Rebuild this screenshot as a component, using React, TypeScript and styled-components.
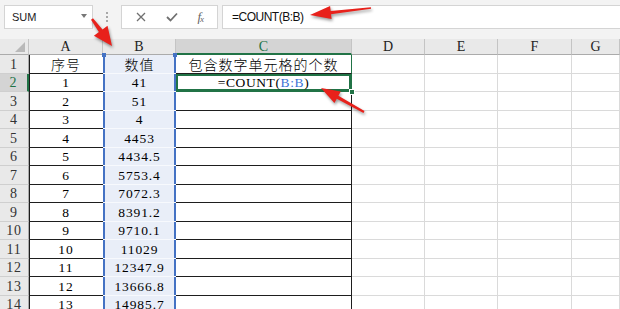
import React from 'react';
import styled, { createGlobalStyle } from 'styled-components';

const GlobalStyle = createGlobalStyle`
  html, body {
    margin: 0;
    padding: 0;
    background: #ffffff;
  }
  * {
    box-sizing: border-box;
  }
`;

const Page = styled.div`
  position: relative;
  width: 620px;
  height: 309px;
  overflow: hidden;
  background: #ffffff;
`;

const Toolbar = styled.div`
  height: 39px;
  background: #f3f3f3;
  display: flex;
  align-items: flex-start;
  padding: 5px 0 0 4px;
`;

const NameBox = styled.div`
  width: 89px;
  height: 24px;
  background: #ffffff;
  border: 1px solid #d4d4d4;
  display: flex;
  align-items: center;
  justify-content: space-between;
  padding: 0 5px 0 7px;
  font-family: 'Liberation Sans', Arial, sans-serif;
  font-size: 11px;
  color: #222;
`;

const DropArrow = styled.span`
  width: 0;
  height: 0;
  border-left: 3.5px solid transparent;
  border-right: 3.5px solid transparent;
  border-top: 4px solid #777;
  margin-bottom: 3px;
`;

const Grip = styled.div`
  width: 28px;
  height: 24px;
  display: flex;
  flex-direction: column;
  align-items: center;
  justify-content: center;
  gap: 2px;
`;

const GripDot = styled.span`
  width: 2px;
  height: 2px;
  background: #a8a8a8;
`;

const FxBox = styled.div`
  width: 97px;
  height: 24px;
  background: #ffffff;
  border: 1px solid #d4d4d4;
  display: flex;
  align-items: center;
  justify-content: space-around;
  padding: 0 4px;
`;

const FxText = styled.span`
  font-family: 'Liberation Serif', serif;
  font-style: italic;
  font-size: 13px;
  color: #666;
  letter-spacing: -1px;

  sub {
    font-size: 9px;
    vertical-align: -1px;
  }
`;

const FormulaInput = styled.div`
  flex: 1;
  height: 24px;
  margin-left: 4px;
  background: #ffffff;
  border: 1px solid #d4d4d4;
  border-right: none;
  display: flex;
  align-items: center;
  padding-left: 9px;
  font-family: 'Liberation Sans', Arial, sans-serif;
  font-size: 12px;
  letter-spacing: -0.5px;
  color: #111;
`;

const Sheet = styled.div`
  display: grid;
  grid-template-columns: 29px 74px 73px 176px 73px 73px 74px 1fr;
  grid-template-rows: 16px;
  grid-auto-rows: 18.5px;
`;

const Corner = styled.div`
  background: #e9e9e9;
  border-right: 1px solid #c4c4c4;
  border-bottom: 1px solid #ababab;
  display: flex;
  align-items: flex-end;
  justify-content: flex-end;
  padding: 0 3px 2px 0;
`;

const ColHeader = styled.div<{ $selected?: boolean }>`
  background: ${(p) => (p.$selected ? '#d4d4d4' : '#e9e9e9')};
  border-right: 1px solid #c4c4c4;
  border-bottom: ${(p) => (p.$selected ? '2px solid #217346' : '1px solid #ababab')};
  display: flex;
  align-items: center;
  justify-content: center;
  font-family: 'Liberation Serif', serif;
  font-size: 14px;
  color: ${(p) => (p.$selected ? '#217346' : '#222')};
  padding-top: 1px;
`;

const RowHeader = styled.div<{ $selected?: boolean }>`
  background: ${(p) => (p.$selected ? '#d4d4d4' : '#e9e9e9')};
  border-bottom: 1px solid #cfcfcf;
  border-right: ${(p) => (p.$selected ? '2px solid #217346' : '1px solid #ababab')};
  display: flex;
  align-items: center;
  justify-content: center;
  font-family: 'Liberation Serif', serif;
  font-size: 14px;
  letter-spacing: 0.8px;
  color: ${(p) => (p.$selected ? '#217346' : '#333')};
  padding-top: 2px;
`;

type Kind = 'a' | 'b' | 'c' | 'grid';

const kindStyles: Record<Kind, string> = {
  a: `
    border-bottom: 1px solid #1e1e1e;
    box-shadow: inset 1px 0 #1e1e1e;
  `,
  b: `
    background: #e9eef8;
    border-bottom: 1px solid #f7f9fd;
    box-shadow: inset 2px 0 #4472c4, inset -2px 0 #4472c4;
  `,
  c: `
    border-right: 1px solid #1e1e1e;
    border-bottom: 1px solid #1e1e1e;
  `,
  grid: `
    border-right: 1px solid #dadada;
    border-bottom: 1px solid #dadada;
  `,
};

const Cell = styled.div<{ $kind: Kind; $active?: boolean; $greenRight?: boolean }>`
  position: relative;
  display: flex;
  align-items: center;
  justify-content: center;
  padding-top: 2px;
  font-family: 'Liberation Serif', serif;
  font-size: 13.5px;
  letter-spacing: 0.9px;
  color: #000;
  white-space: nowrap;
  ${(p) => kindStyles[p.$kind]}
  ${(p) => (p.$greenRight ? 'border-right-color: #217346;' : '')}
  ${(p) =>
    p.$active
      ? `
    border-right-color: #217346;
    border-bottom-color: #217346;
    box-shadow: inset 0 0 0 2px #217346;
  `
      : ''}
`;

const CjkText = styled.span`
  font-family: 'Noto Sans CJK SC', sans-serif;
  font-size: 14px;
  font-weight: 300;
  letter-spacing: 1px;
  line-height: 1;
  margin-top: -2px;
`;

const FormulaText = styled.span`
  letter-spacing: 0.6px;
`;

const RefText = styled.span`
  color: #3d74d6;
`;

const FillHandle = styled.span`
  position: absolute;
  right: -4px;
  bottom: -4px;
  width: 6px;
  height: 6px;
  background: #217346;
  border: 1px solid #ffffff;
  z-index: 2;
`;

const RefHandle = styled.span<{ $side: 'left' | 'right' }>`
  position: absolute;
  top: -2px;
  ${(p) => (p.$side === 'left' ? 'left: -1px;' : 'right: -1px;')}
  width: 4px;
  height: 4px;
  background: #4472c4;
  z-index: 2;
`;

const Annotations = styled.svg`
  position: absolute;
  left: 0;
  top: 0;
  width: 620px;
  height: 309px;
  pointer-events: none;
  filter: drop-shadow(1px 2px 1.5px rgba(0, 0, 0, 0.4));
`;

const values: [string, string][] = [
  ['1', '41'],
  ['2', '51'],
  ['3', '4'],
  ['4', '4453'],
  ['5', '4434.5'],
  ['6', '5753.4'],
  ['7', '7072.3'],
  ['8', '8391.2'],
  ['9', '9710.1'],
  ['10', '11029'],
  ['11', '12347.9'],
  ['12', '13666.8'],
  ['13', '14985.7'],
];

const columns = ['A', 'B', 'C', 'D', 'E', 'F', 'G'];

// tail -> tip, returns polygon points for a tapered arrow
function arrow(tx: number, ty: number, hx: number, hy: number, headLen: number, headHalf: number, neck: number, tail: number) {
  const dx = hx - tx;
  const dy = hy - ty;
  const len = Math.hypot(dx, dy);
  const ux = dx / len;
  const uy = dy / len;
  const nx = -uy;
  const ny = ux;
  const bx = hx - ux * headLen;
  const by = hy - uy * headLen;
  const pts = [
    [tx + nx * tail, ty + ny * tail],
    [bx + nx * neck, by + ny * neck],
    [bx + nx * headHalf, by + ny * headHalf],
    [hx, hy],
    [bx - nx * headHalf, by - ny * headHalf],
    [bx - nx * neck, by - ny * neck],
    [tx - nx * tail, ty - ny * tail],
  ];
  return pts.map((p) => `${p[0].toFixed(1)},${p[1].toFixed(1)}`).join(' ');
}

const App: React.FC = () => {
  return (
    <Page>
      <GlobalStyle />
      <Toolbar>
        <NameBox>
          SUM
          <DropArrow />
        </NameBox>
        <Grip>
          <GripDot />
          <GripDot />
          <GripDot />
        </Grip>
        <FxBox>
          <svg width="10" height="10" viewBox="0 0 10 10">
            <path d="M1 1 L9 9 M9 1 L1 9" stroke="#707070" strokeWidth="1.3" />
          </svg>
          <svg width="12" height="10" viewBox="0 0 12 10">
            <path d="M1 5 L4.5 8.5 L11 1.5" stroke="#707070" strokeWidth="1.8" fill="none" />
          </svg>
          <FxText>
            f<sub>x</sub>
          </FxText>
        </FxBox>
        <FormulaInput>=COUNT(B:B)</FormulaInput>
      </Toolbar>

      <Sheet>
        <Corner>
          <svg width="10" height="10" viewBox="0 0 10 10">
            <polygon points="10,0 10,10 0,10" fill="#b9b9b9" />
          </svg>
        </Corner>
        {columns.map((c) => (
          <ColHeader key={c} $selected={c === 'C'}>
            {c}
          </ColHeader>
        ))}

        <RowHeader>1</RowHeader>
        <Cell $kind="a">
          <CjkText>序号</CjkText>
        </Cell>
        <Cell $kind="b">
          <RefHandle $side="left" />
          <CjkText>数值</CjkText>
          <RefHandle $side="right" />
        </Cell>
        <Cell $kind="c" $greenRight>
          <CjkText>包含数字单元格的个数</CjkText>
        </Cell>
        <Cell $kind="grid" />
        <Cell $kind="grid" />
        <Cell $kind="grid" />
        <Cell $kind="grid" />

        {values.map(([n, v], i) => (
          <React.Fragment key={n}>
            <RowHeader $selected={i === 0}>{i + 2}</RowHeader>
            <Cell $kind="a">{n}</Cell>
            <Cell $kind="b">{v}</Cell>
            <Cell $kind="c" $active={i === 0}>
              {i === 0 && (
                <>
                  <FormulaText>
                    =COUNT(<RefText>B:B</RefText>)
                  </FormulaText>
                  <FillHandle />
                </>
              )}
            </Cell>
            <Cell $kind="grid" />
            <Cell $kind="grid" />
            <Cell $kind="grid" />
            <Cell $kind="grid" />
          </React.Fragment>
        ))}
      </Sheet>

      <Annotations viewBox="0 0 620 309">
        <polygon points={arrow(371, 8, 310, 15, 21, 6.5, 1.6, 0.8)} fill="#e8211b" />
        <polygon points={arrow(92, 19, 112, 46, 19, 8.5, 2.2, 1.2)} fill="#e8211b" />
        <polygon points={arrow(364, 112, 321, 88, 19, 6.5, 1.7, 1)} fill="#e8211b" />
      </Annotations>
    </Page>
  );
};

export default App;
